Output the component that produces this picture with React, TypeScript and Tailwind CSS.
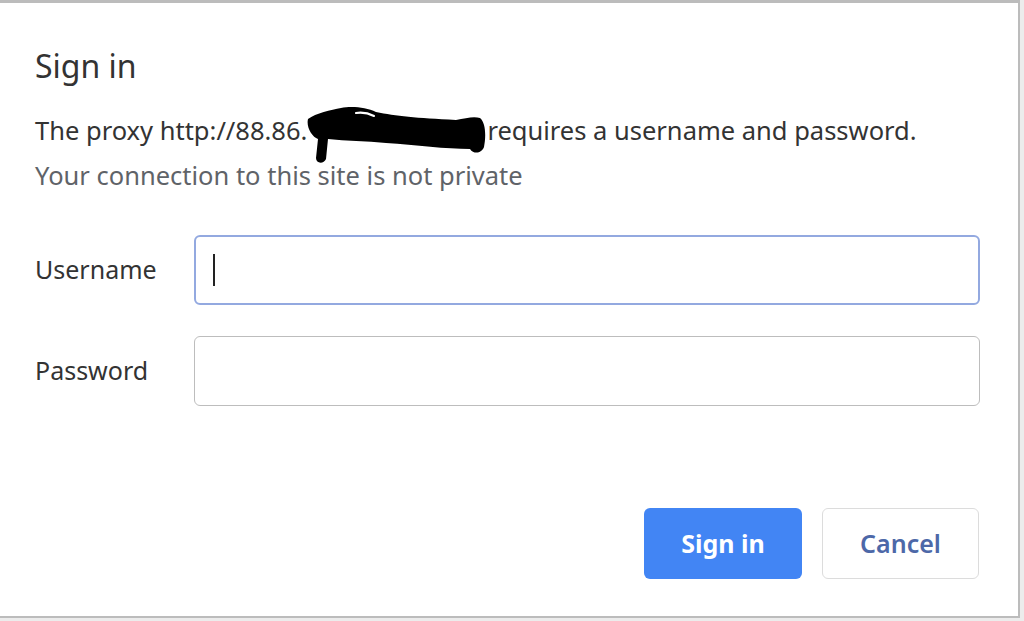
import React from "react";

function Redaction() {
  // hand-drawn black marker scribble covering part of the address
  return (
    <svg width="180" height="58" viewBox="0 0 180 58" className="inline-block shrink-0 -ml-[1px] mr-[1px] mt-[8px]">
      <path
        d="M2 14 C 10 8, 25 5, 35 3 C 45 1, 60 2, 70 7 C 90 11, 110 13, 150 15 C 160 13, 168 11, 174 13 C 180 18, 180 32, 178 42 C 176 48, 168 50, 164 44 C 140 44, 110 40, 80 38 C 60 36, 40 36, 22 34 L 20 54 C 18 59, 10 59, 10 53 L 12 34 C 6 32, 0 22, 2 14 Z"
        fill="#000"
      />
      <path d="M50 8 C 56 7, 62 8, 68 11" stroke="#fff" strokeWidth="2" strokeLinecap="round" fill="none" />
    </svg>
  );
}

export default function App() {
  return (
    <div className="w-[1024px] h-[621px] bg-[#ececec] overflow-hidden">
      <div
        className="w-[1020px] h-[618px] bg-white border-t-[3px] border-r-[2px] border-b-[2px] border-[#bcbcbc] pl-[35px] pr-[38px] flex flex-col"
        style={{ fontFamily: '"Noto Sans", "Open Sans", Arial, sans-serif' }}
      >
        <h1 className="mt-[43px] text-[32px] leading-[40px] text-[#333333]">Sign in</h1>

        <p className="mt-[29px] h-[30px] flex items-center text-[25.5px] leading-[30px] text-[#333333] whitespace-nowrap">
          <span>The proxy http://88.86.</span>
          <Redaction />
          <span>requires a username and password.</span>
        </p>
        <p className="mt-[15px] text-[25.5px] leading-[30px] text-[#5f6368] whitespace-nowrap">
          Your connection to this site is not private
        </p>

        <div className="mt-[45px] flex items-center">
          <label className="w-[159px] text-[25px] text-[#333333]">Username</label>
          <div className="flex-1 h-[70px] rounded-[6px] border-2 border-[#93a9e0] flex items-center pl-[17px]">
            <span className="w-[2px] h-[32px] bg-[#222222]" />
          </div>
        </div>

        <div className="mt-[31px] flex items-center">
          <label className="w-[159px] text-[25px] text-[#333333]">Password</label>
          <div className="flex-1 h-[70px] rounded-[6px] border-[1.5px] border-[#bdbdbd]" />
        </div>

        <div className="mt-[102px] flex justify-end gap-[20px]">
          <button className="w-[158px] h-[71px] rounded-[6px] bg-[#4285f4] text-white text-[25px] font-bold">
            Sign in
          </button>
          <button className="w-[157px] h-[71px] rounded-[6px] bg-white border-[1.5px] border-[#dcdcdc] text-[#4d68a8] text-[25px] font-semibold mr-px">
            Cancel
          </button>
        </div>
      </div>
    </div>
  );
}
